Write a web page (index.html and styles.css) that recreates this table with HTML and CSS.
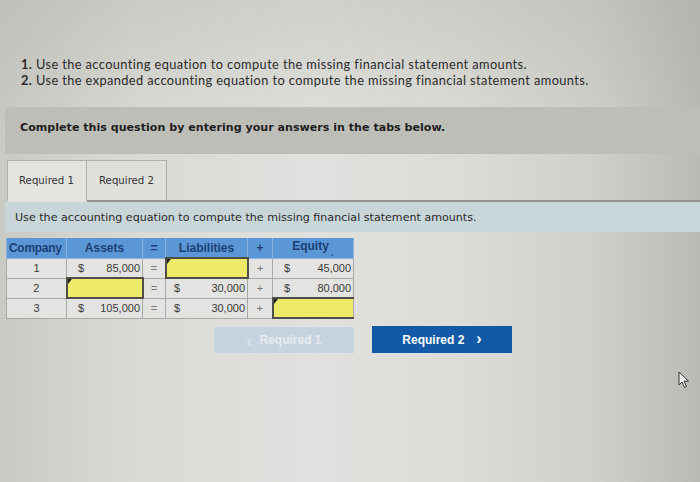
FILE: index.html
```html
<!DOCTYPE html>
<html>
<head>
<meta charset="utf-8">
<link rel="stylesheet" href="styles.css">
</head>
<body>
<div class="page">
  <div class="instructions">
    <p class="line"><b>1.</b> Use the accounting equation to compute the missing financial statement amounts.</p>
    <p class="line"><b>2.</b> Use the expanded accounting equation to compute the missing financial statement amounts.</p>
  </div>

  <div class="banner">Complete this question by entering your answers in the tabs below.</div>

  <div class="tabs">
    <div class="tab active">Required 1</div>
    <div class="tab">Required 2</div>
    <div class="tab-fill"></div>
  </div>

  <div class="prompt">Use the accounting equation to compute the missing financial statement amounts.</div>

  <table class="grid">
    <colgroup>
      <col class="w-company">
      <col class="w-cur1"><col class="w-amt1">
      <col class="w-op1">
      <col class="w-cur2"><col class="w-amt2">
      <col class="w-op2">
      <col class="w-cur3"><col class="w-amt3">
    </colgroup>
    <thead>
      <tr>
        <th class="h-company">Company</th>
        <th colspan="2">Assets</th>
        <th>=</th>
        <th colspan="2">Liabilities</th>
        <th>+</th>
        <th colspan="2">Equity<span class="tick">ˎ</span></th>
      </tr>
    </thead>
    <tbody>
      <tr>
        <td class="num-id">1</td>
        <td class="cur">$</td><td class="amt">85,000</td>
        <td class="op">=</td>
        <td class="input" colspan="2"><span class="flag"></span></td>
        <td class="op">+</td>
        <td class="cur">$</td><td class="amt">45,000</td>
      </tr>
      <tr>
        <td class="num-id">2</td>
        <td class="input" colspan="2"><span class="flag"></span></td>
        <td class="op">=</td>
        <td class="cur cur-l">$</td><td class="amt">30,000</td>
        <td class="op">+</td>
        <td class="cur">$</td><td class="amt">80,000</td>
      </tr>
      <tr>
        <td class="num-id">3</td>
        <td class="cur">$</td><td class="amt">105,000</td>
        <td class="op">=</td>
        <td class="cur cur-l">$</td><td class="amt">30,000</td>
        <td class="op">+</td>
        <td class="input" colspan="2"><span class="flag"></span></td>
      </tr>
    </tbody>
  </table>

  <div class="nav">
    <div class="btn disabled"><span class="chev">&lsaquo;</span>Required 1</div>
    <div class="btn primary">Required 2<span class="chev">&rsaquo;</span></div>
  </div>

  <svg class="cursor" width="12" height="18" viewBox="0 0 12 18">
    <path d="M1 1 L1 14 L4 11 L6.5 16.5 L8.5 15.6 L6 10.2 L10.5 10.2 Z" fill="#f2f2f2" stroke="#333" stroke-width="1" stroke-linejoin="round"/>
  </svg>
</div>
</body>
</html>
```

FILE: styles.css
```css
html, body {
  margin: 0;
  padding: 0;
}
body {
  width: 700px;
  height: 482px;
  overflow: hidden;
  background:
    linear-gradient(to bottom, rgba(160,160,150,0.25) 0px, rgba(160,160,150,0) 140px),
    linear-gradient(to right, #cacac5 0%, #dadad6 20%, #e0e1de 45%, #dcdcd8 65%, #cfd0cb 85%, #b9bab4 100%);
}
.page {
  position: relative;
  width: 700px;
  height: 482px;
  display: flex;
  flex-direction: column;
  font-family: "Lato", "Open Sans", sans-serif;
}
.instructions {
  padding: 57px 0 0 21px;
  color: #2b2b2b;
  font-size: 12.8px;
  letter-spacing: 0.4px;
}
.line {
  margin: 0;
  line-height: 15.5px;
}
.line b {
  font-weight: 700;
}
.banner {
  margin: 19px 0 0 5px;
  height: 47px;
  background: #bebeb8;
  color: #1e1e1e;
  font-family: "DejaVu Sans", Verdana, sans-serif;
  font-weight: bold;
  font-size: 11.1px;
  display: flex;
  align-items: center;
  padding-left: 15px;
  padding-bottom: 6px;
  box-sizing: border-box;
}
.tabs {
  margin: 6px 0 0 7px;
  height: 42px;
  display: flex;
  font-family: "DejaVu Sans", Verdana, sans-serif;
  font-size: 10.2px;
  color: #333;
}
.tab {
  width: 80px;
  box-sizing: border-box;
  border: 1px solid #b0b0ab;
  border-bottom: 2px solid #939390;
  background: #dfdfdb;
  display: flex;
  align-items: center;
  padding-left: 11px;
}
.tab + .tab {
  border-left: none;
  padding-left: 12px;
}
.tab.active {
  border-bottom-color: transparent;
  background: #e3e3df;
}
.tab-fill {
  flex: 1;
  border-bottom: 2px solid #939390;
}
.prompt {
  margin-left: 5px;
  height: 30px;
  background: #c8d5d9;
  color: #2a2a2a;
  font-family: "DejaVu Sans", Verdana, sans-serif;
  font-size: 11.1px;
  display: flex;
  align-items: center;
  padding-left: 10px;
}
.grid {
  margin: 6px 0 0 6px;
  width: 347px;
  border-collapse: collapse;
  font-family: "Liberation Sans", Arial, sans-serif;
  font-size: 11px;
  color: #3a3a3a;
  table-layout: fixed;
}
.w-company { width: 60px; }
.w-cur1 { width: 24px; }
.w-amt1 { width: 52px; }
.w-op1 { width: 23px; }
.w-cur2 { width: 22px; }
.w-amt2 { width: 60px; }
.w-op2 { width: 25px; }
.w-cur3 { width: 26px; }
.w-amt3 { width: 55px; }
.grid th {
  background: #5b97d6;
  color: #1d3e78;
  font-weight: bold;
  font-size: 12px;
  height: 19px;
  padding: 0;
  border: 1px solid #8fb3dc;
  border-top: none;
  text-align: center;
}
.grid th.h-company {
  text-align: left;
  padding-left: 2px;
  letter-spacing: -0.3px;
}
.grid td {
  height: 18px;
  padding: 0;
  border-top: 1px solid #a9a9a6;
  border-bottom: 1px solid #a9a9a6;
  background: #e3e3e1;
  white-space: nowrap;
}
.tick {
  font-size: 9px;
  color: #1d3e78;
  vertical-align: -4px;
  margin-left: 2px;
}
.grid .num-id {
  text-align: center;
  border-left: 1px solid #a9a9a6;
  border-right: 1px solid #a9a9a6;
}
.grid .cur {
  padding-left: 11px;
  border-left: 1px solid #a9a9a6;
}
.grid .cur-l {
  padding-left: 8px;
}
.grid .amt {
  text-align: right;
  padding-right: 2px;
  border-right: 1px solid #a9a9a6;
}
.grid .op {
  text-align: center;
  color: #777;
}
.grid td:last-child {
  border-right: 1px solid #a9a9a6;
}
.grid .input {
  background: #ecea68;
  border: 2px solid #4e4e48;
  position: relative;
}
.flag {
  position: absolute;
  left: 0;
  top: 0;
  width: 0;
  height: 0;
  border-top: 5px solid #222;
  border-right: 4px solid transparent;
}
.nav {
  margin: 7px 0 0 214px;
  display: flex;
  gap: 18px;
}
.btn {
  width: 140px;
  height: 27px;
  box-sizing: border-box;
  display: flex;
  align-items: center;
  justify-content: center;
  font-family: "Liberation Sans", Arial, sans-serif;
  font-weight: bold;
  font-size: 12px;
}
.btn.disabled {
  background: #c7d4df;
  color: #e4ebf1;
  margin-top: 1px;
  height: 26px;
}
.btn.disabled .chev {
  font-size: 15px;
  margin-right: 8px;
  font-weight: normal;
}
.btn.primary {
  background: #125aa8;
  color: #ffffff;
}
.btn.primary .chev {
  font-size: 16px;
  margin-left: 12px;
  margin-top: -2px;
}
.cursor {
  position: absolute;
  left: 678px;
  top: 371px;
}
```
